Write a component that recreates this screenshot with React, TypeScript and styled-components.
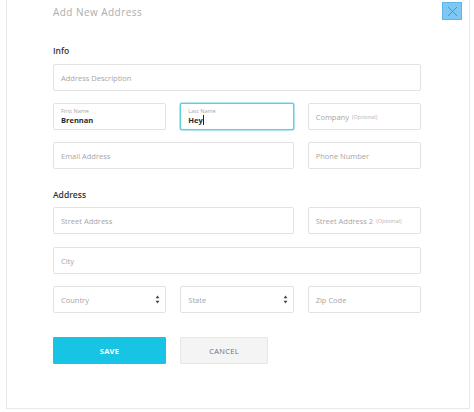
import React, { useState } from 'react';
import styled, { createGlobalStyle, css } from 'styled-components';

const GlobalStyle = createGlobalStyle`
  html, body {
    margin: 0;
    padding: 0;
    background: #fff;
  }
  body {
    font-family: 'Open Sans', 'Lato', sans-serif;
    color: #333;
  }
  * {
    box-sizing: border-box;
  }
`;

const Page = styled.div`
  padding: 0 4px 4px 6px;
`;

const Panel = styled.div`
  position: relative;
  height: 409px;
  border: 1px solid #e9e9e9;
  border-top: none;
  padding: 0 48px 0 46px;
`;

const Header = styled.div`
  height: 24px;
  display: flex;
  align-items: center;
`;

const Title = styled.h2`
  margin: 0;
  font-size: 10px;
  font-weight: 400;
  letter-spacing: 0.45px;
  color: #adadad;
`;

const CloseButton = styled.button`
  position: absolute;
  top: 2px;
  right: 7px;
  width: 20px;
  height: 18px;
  padding: 0;
  border: 1px solid #62b5e8;
  background: #7dc7f5;
  display: flex;
  align-items: center;
  justify-content: center;
  cursor: pointer;
`;

const SectionLabel = styled.div<{ $top: number; $bottom: number }>`
  margin: ${p => p.$top}px 0 ${p => p.$bottom}px;
  height: 12px;
  line-height: 12px;
  font-size: 8.5px;
  font-weight: 600;
  color: #333;
`;

const Row = styled.div<{ $gap: number }>`
  display: grid;
  grid-template-columns: repeat(3, 1fr);
  column-gap: 14px;
  margin-bottom: ${p => p.$gap}px;
`;

const fieldBox = css<{ $focused?: boolean; $span?: number }>`
  grid-column: span ${p => p.$span ?? 1};
  height: 27px;
  border: 1px solid ${p => (p.$focused ? '#5dd0e2' : '#e2e2e2')};
  box-shadow: ${p => (p.$focused ? '0 0 0 0.5px #5dd0e2' : 'none')};
  border-radius: 2px;
  background: #fff;
`;

const Field = styled.div<{ $focused?: boolean; $span?: number }>`
  ${fieldBox};
  display: flex;
  align-items: center;
  padding: 0 7px;
  font-size: 7.5px;
  color: #a6a6a6;
`;

const Optional = styled.span`
  font-size: 5.5px;
  margin-left: 3px;
  color: #b5b5b5;
`;

const FilledField = styled.div<{ $focused?: boolean; $span?: number }>`
  ${fieldBox};
  display: flex;
  flex-direction: column;
  justify-content: center;
  padding: 0 7px;
`;

const SmallLabel = styled.div`
  font-size: 5.5px;
  color: #a8a8a8;
  line-height: 7px;
`;

const Value = styled.div`
  font-size: 7.5px;
  font-weight: 700;
  color: #2a2a2a;
  line-height: 11px;
  display: flex;
  align-items: center;
`;

const Caret = styled.span`
  display: inline-block;
  width: 1px;
  height: 10px;
  margin-left: 0.5px;
  background: #222;
`;

const SelectField = styled(Field)`
  justify-content: space-between;
  padding-right: 5px;
`;

const Arrows = styled.svg`
  width: 5px;
  height: 9px;
`;

const ButtonRow = styled.div`
  display: flex;
  gap: 14px;
  margin-top: 24px;
`;

const Button = styled.button<{ $primary?: boolean }>`
  height: 27px;
  width: ${p => (p.$primary ? '113px' : '88px')};
  border-radius: 1px;
  font-family: 'Open Sans', sans-serif;
  font-size: 7.5px;
  font-weight: ${p => (p.$primary ? 700 : 400)};
  letter-spacing: 0.3px;
  cursor: pointer;
  ${p =>
    p.$primary
      ? css`
          background: #18c4e4;
          border: 1px solid #18c4e4;
          color: #fff;
        `
      : css`
          background: #f4f4f4;
          border: 1px solid #e6e6e6;
          color: #707070;
        `}
`;

const SelectArrows = () => (
  <Arrows viewBox="0 0 5 9">
    <path d="M2.5 0.5 L4.5 3.2 H0.5 Z" fill="#444" />
    <path d="M2.5 8.5 L4.5 5.8 H0.5 Z" fill="#444" />
  </Arrows>
);

const App: React.FC = () => {
  const [first] = useState('Brennan');
  const [last] = useState('Hey');

  return (
    <Page>
      <GlobalStyle />
      <Panel>
        <Header>
          <Title>Add New Address</Title>
        </Header>
        <CloseButton aria-label="Close">
          <svg width="11" height="11" viewBox="0 0 11 11">
            <path d="M1 1 L10 10 M10 1 L1 10" stroke="#5a8db5" strokeWidth="1" />
          </svg>
        </CloseButton>

        <SectionLabel $top={21} $bottom={7}>Info</SectionLabel>
        <Row $gap={12}>
          <Field $span={3}>Address Description</Field>
        </Row>
        <Row $gap={12}>
          <FilledField>
            <SmallLabel>First Name</SmallLabel>
            <Value>{first}</Value>
          </FilledField>
          <FilledField $focused>
            <SmallLabel>Last Name</SmallLabel>
            <Value>
              {last}
              <Caret />
            </Value>
          </FilledField>
          <Field>
            Company<Optional>(Optional)</Optional>
          </Field>
        </Row>
        <Row $gap={0}>
          <Field $span={2}>Email Address</Field>
          <Field>Phone Number</Field>
        </Row>

        <SectionLabel $top={20} $bottom={6}>Address</SectionLabel>
        <Row $gap={13}>
          <Field $span={2}>Street Address</Field>
          <Field>
            Street Address 2<Optional>(Optional)</Optional>
          </Field>
        </Row>
        <Row $gap={12}>
          <Field $span={3}>City</Field>
        </Row>
        <Row $gap={0}>
          <SelectField>
            Country
            <SelectArrows />
          </SelectField>
          <SelectField>
            State
            <SelectArrows />
          </SelectField>
          <Field>Zip Code</Field>
        </Row>

        <ButtonRow>
          <Button $primary>SAVE</Button>
          <Button>CANCEL</Button>
        </ButtonRow>
      </Panel>
    </Page>
  );
};

export default App;
